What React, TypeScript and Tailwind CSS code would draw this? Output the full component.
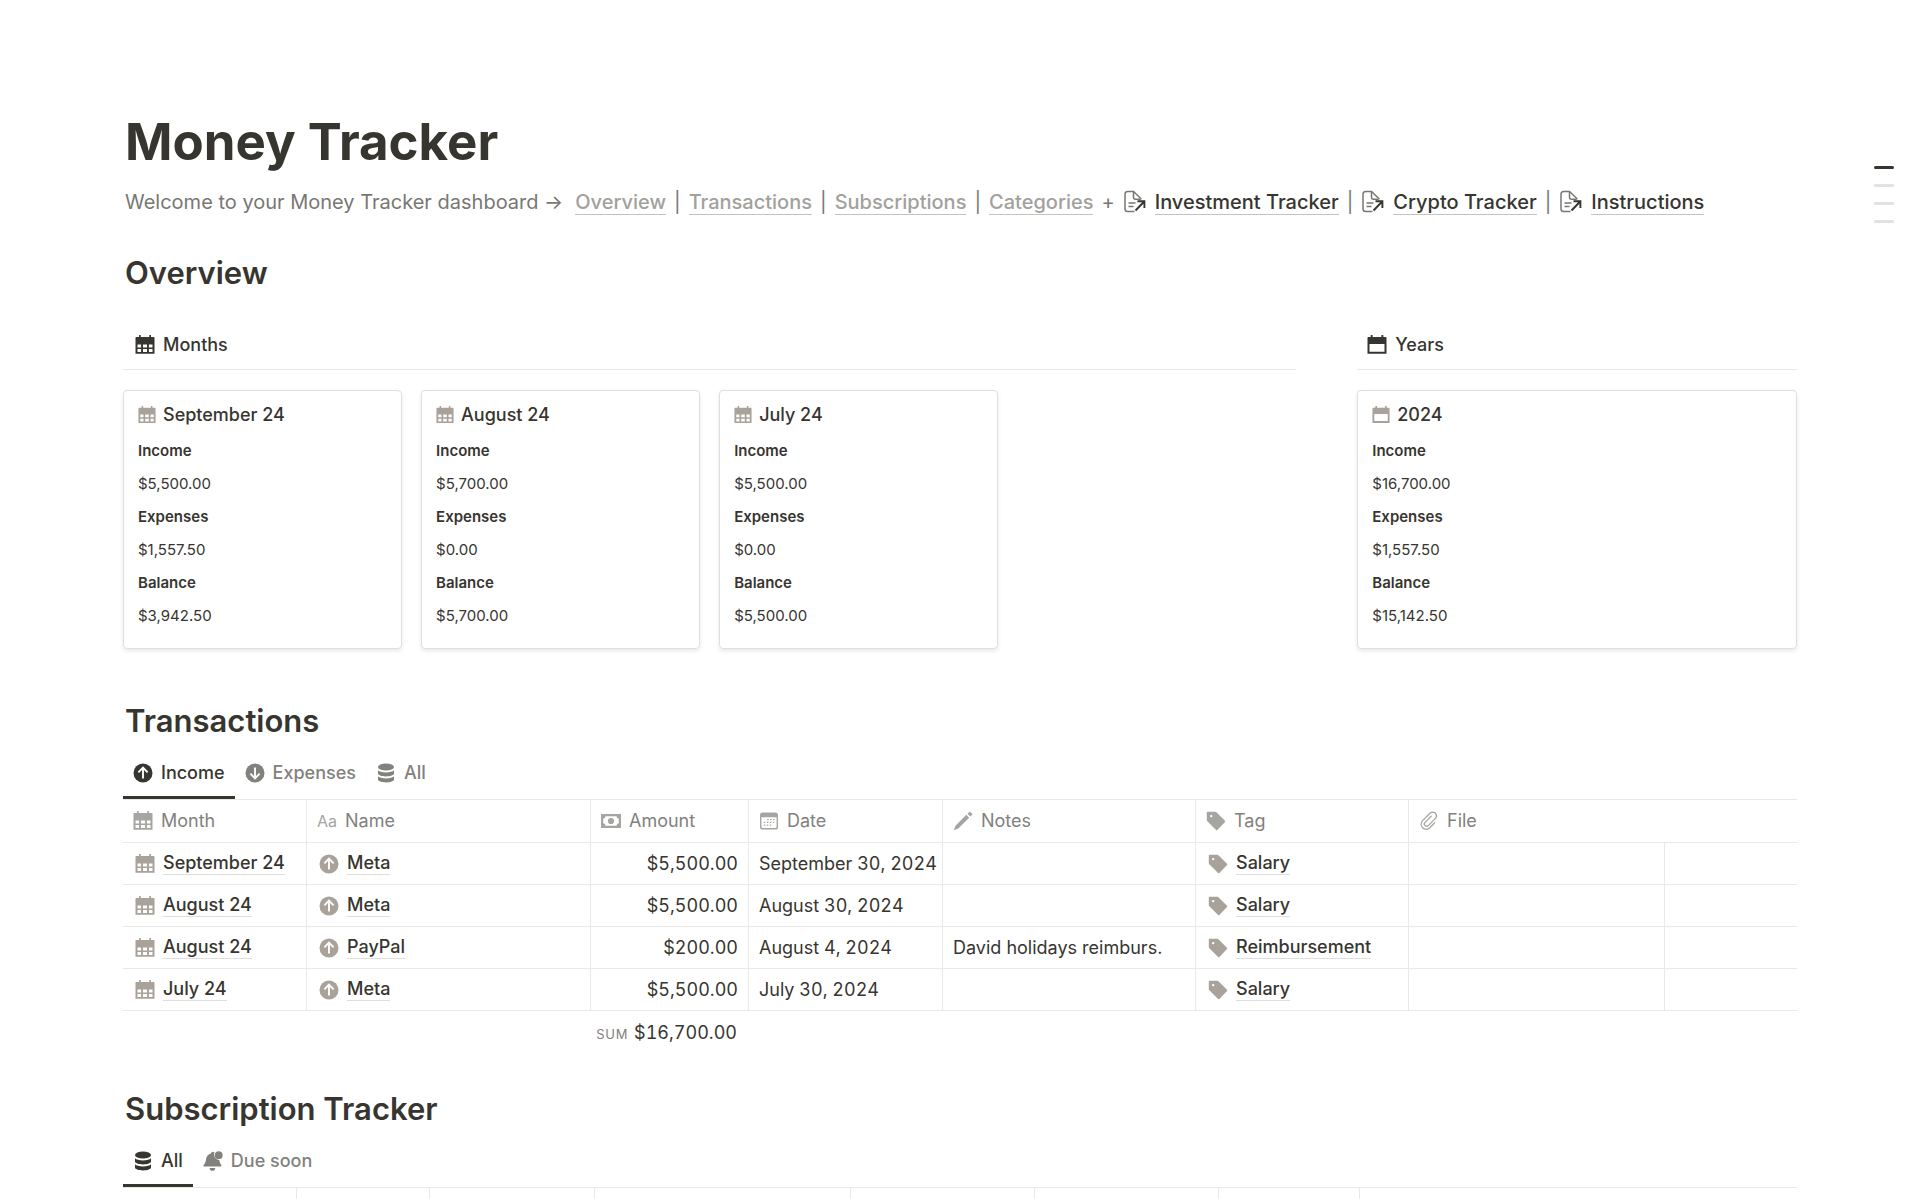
import type { ReactNode, SVGProps } from "react";

type IconProps = SVGProps<SVGSVGElement>;

function Svg({ children, viewBox = "0 0 20 20", className = "", ...rest }: IconProps & { children: ReactNode }) {
  return (
    <svg viewBox={viewBox} fill="currentColor" aria-hidden="true" className={`shrink-0 ${className}`} {...rest}>
      {children}
    </svg>
  );
}

const CalendarGrid = (p: IconProps) => (
  <Svg {...p}>
    <path
      fillRule="evenodd"
      d="M4 0h1.700v2h8.600V0H16v2h2.700c.4 0 .8.400.8.800v16H.5v-16c0-.400.400-.8.8-.8H4zM2.500 9.500v3h3.600v-3zM8 9.500v3h4v-3zM13.900 9.500v3h3.600v-3zM2.500 14.100v3h3.600v-3zM8 14.100v3h4v-3zM13.900 14.100v3h3.600v-3z"
    />
  </Svg>
);

const CalendarBlank = (p: IconProps) => (
  <Svg {...p}>
    <path
      fillRule="evenodd"
      d="M3.700 0h1.900v2h8.800V0h1.900v2h2.400c.4 0 .8.400.8.800v16H.5v-16c0-.400.400-.8.8-.8h2.400zM2.500 9v7.800h15V9z"
    />
  </Svg>
);

const ArrowUp = (p: IconProps) => (
  <Svg {...p}>
    <circle cx="10" cy="10" r="9.500" />
    <path d="M10 15.600V5M5.400 9.300 10 4.700l4.600 4.600" fill="none" stroke="#fff" strokeWidth="1.900" />
  </Svg>
);

const ArrowDown = (p: IconProps) => (
  <Svg {...p}>
    <circle cx="10" cy="10" r="9.500" />
    <path d="M10 4.400V15M5.400 10.700l4.600 4.600 4.600-4.600" fill="none" stroke="#fff" strokeWidth="1.900" />
  </Svg>
);

const Database = (p: IconProps) => (
  <Svg {...p}>
    <ellipse cx="10" cy="4" rx="8" ry="3.600" />
    <path d="M2 7.200c1.300 1.300 4.400 2.200 8 2.200s6.700-.9 8-2.200v3.300c0 1.600-3.600 2.900-8 2.900s-8-1.300-8-2.900z" />
    <path d="M2 13.300c1.300 1.300 4.400 2.200 8 2.200s6.700-.9 8-2.200v3.300c0 1.600-3.600 2.900-8 2.900s-8-1.300-8-2.900z" />
  </Svg>
);

const Banknote = (p: IconProps) => (
  <Svg {...p}>
    <path
      fillRule="evenodd"
      d="M0 3h20v14H0zM4.500 5.200a2.600 2.600 0 0 1-2.300 2.500v4.600a2.600 2.600 0 0 1 2.300 2.500h11a2.600 2.600 0 0 1 2.300-2.500V7.700a2.600 2.600 0 0 1-2.300-2.500z"
    />
    <circle cx="10" cy="10" r="3.100" />
  </Svg>
);

const DateIcon = (p: IconProps) => (
  <Svg {...p}>
    <path
      fillRule="evenodd"
      d="M3.600 1.500h12.800a2.600 2.600 0 0 1 2.600 2.600v11.800a2.600 2.600 0 0 1-2.600 2.600H3.600A2.600 2.600 0 0 1 1 15.900V4.100a2.600 2.600 0 0 1 2.600-2.600zM2.400 6.200v9.300c0 .9.700 1.600 1.600 1.600h12c.9 0 1.600-.7 1.600-1.600V6.200z"
    />
    <path
      d="M8.200 8.700h7.400M4.800 11.400h10.800M4.800 14.200h8.200"
      fill="none"
      stroke="currentColor"
      strokeWidth="1.300"
      strokeDasharray="1.500 1.500"
    />
  </Svg>
);

const Pencil = (p: IconProps) => (
  <Svg {...p}>
    <path d="M13.300 3.800 16.200 6.700 5.300 17.500.8 19.200l1.700-4.500z" />
    <path d="m16.800.5 2.800 2.800-2.300 2.300-2.800-2.800z" />
  </Svg>
);

const Tag = (p: IconProps) => (
  <Svg {...p}>
    <path
      fillRule="evenodd"
      d="M.8 1.700c0-.6.400-1 1-1h7.400c.5 0 .9.200 1.200.5l8.600 8.600c.4.400.4.900 0 1.300l-7.600 7.800c-.4.400-.9.400-1.300 0L1.300 10.300a1.700 1.700 0 0 1-.5-1.200zM5.200 3.900a1.200 1.200 0 1 0 0 2.400 1.200 1.200 0 0 0 0-2.400z"
    />
  </Svg>
);

const Clip = (p: IconProps) => (
  <Svg {...p}>
    <path
      d="m15.700 11.700-4.900 5.100a5 5 0 0 1-7.200 0 5.200 5.200 0 0 1 0-7.200l7.300-7.300a3.700 3.700 0 0 1 5.300 0 3.800 3.800 0 0 1 0 5.300l-6.900 7a2.200 2.200 0 0 1-3.200-3.200l6.100-6.100"
      fill="none"
      stroke="currentColor"
      strokeWidth="1.300"
      strokeLinecap="round"
    />
  </Svg>
);

const Bell = (p: IconProps) => (
  <Svg {...p}>
    <path d="M8.400 1.400c.8-.8 2.200-.8 3 0A5.600 5.600 0 0 0 16.200 9c.3 1.900.9 3.400 2 4.700.3.400.4 1.700-.3 1.700H1c-.6 0-.6-.9-.3-1.300 1.900-2.200 2-4 2.500-6.500.5-2.800 2.300-4.500 4.700-5.200z" />
    <circle cx="15.700" cy="4.200" r="3.900" />
    <path d="M6.600 16.900h5.600a2.800 2.800 0 0 1-5.600 0z" />
  </Svg>
);

const PageLink = (p: IconProps) => (
  <Svg viewBox="0 0 24 24" {...p}>
    <g fill="none" stroke="currentColor" strokeWidth="1.500">
      <path d="M11.500 21.500H4.800A2.800 2.800 0 0 1 2 18.700V4.300a2.800 2.800 0 0 1 2.800-2.800h5.700l7.300 7v1" />
      <path d="M10.500 1.800v5.400c0 1.300.8 2 2 2h5M5.500 13h7M5.500 16.500h5" />
    </g>
    <path d="m12.500 20.500 8.700-9M14.500 11.200h6.900V18" fill="none" stroke="#37352f" strokeWidth="1.900" />
  </Svg>
);

const jumpLinks = ["Overview", "Transactions", "Subscriptions", "Categories"];
const pageLinks = ["Investment Tracker", "Crypto Tracker", "Instructions"];

const months = [
  { name: "September 24", income: "$5,500.00", expenses: "$1,557.50", balance: "$3,942.50" },
  { name: "August 24", income: "$5,700.00", expenses: "$0.00", balance: "$5,700.00" },
  { name: "July 24", income: "$5,500.00", expenses: "$0.00", balance: "$5,500.00" },
];
const year = { name: "2024", income: "$16,700.00", expenses: "$1,557.50", balance: "$15,142.50" };

const transactions = [
  { month: "September 24", name: "Meta", amount: "$5,500.00", date: "September 30, 2024", notes: "", tag: "Salary" },
  { month: "August 24", name: "Meta", amount: "$5,500.00", date: "August 30, 2024", notes: "", tag: "Salary" },
  { month: "August 24", name: "PayPal", amount: "$200.00", date: "August 4, 2024", notes: "David holidays reimburs.", tag: "Reimbursement" },
  { month: "July 24", name: "Meta", amount: "$5,500.00", date: "July 30, 2024", notes: "", tag: "Salary" },
];

function Heading({ id, children }: { id: string; children: ReactNode }) {
  return (
    <h2 id={id} className="px-0.5 text-[31px] leading-10 font-semibold">
      {children}
    </h2>
  );
}

function Card({ icon, data }: { icon: ReactNode; data: typeof year }) {
  const fields = [
    ["Income", data.income],
    ["Expenses", data.expenses],
    ["Balance", data.balance],
  ];
  return (
    <article className="rounded-sm border border-[#dfdfde] px-3.5 pt-1 pb-4 shadow-[0_2px_4px_rgba(15,15,15,0.09)]">
      <h3 className="flex h-[39px] items-center gap-[7px] text-lg font-medium">
        <span className="text-[#a8a29a]">{icon}</span>
        {data.name}
      </h3>
      <dl className="text-[15px] leading-[33px]">
        {fields.map(([label, value]) => (
          <div key={label}>
            <dt className="font-semibold">{label}</dt>
            <dd>{value}</dd>
          </div>
        ))}
      </dl>
    </article>
  );
}

function Tab({ icon, label, active = false }: { icon: ReactNode; label: string; active?: boolean }) {
  return (
    <button
      role="tab"
      aria-selected={active}
      className={
        active
          ? "flex h-[50px] items-center gap-2 border-b-3 border-[#37352f] px-2.5 text-lg font-medium"
          : "flex h-[50px] items-center gap-2 border-b-3 border-transparent px-2.5 text-lg font-medium text-[#82817d]"
      }
    >
      {icon}
      {label}
    </button>
  );
}

function CellLink({ icon, children }: { icon: ReactNode; children: ReactNode }) {
  return (
    <a href="#transactions" className="flex items-center gap-2 pl-0.5 font-medium">
      <span className="text-[#a8a29a]">{icon}</span>
      <span className="border-b border-[#dededc] leading-[22px]">{children}</span>
    </a>
  );
}

function Th({ icon, children, span = 1 }: { icon: ReactNode; children: ReactNode; span?: number }) {
  return (
    <th
      colSpan={span}
      scope="col"
      className="h-[43px] border-r border-b border-[#e9e9e7] px-2.5 text-left font-normal text-[#82817d] last:border-r-0"
    >
      <span className="flex items-center gap-2">
        <span className="text-[#a5a5a1]">{icon}</span>
        {children}
      </span>
    </th>
  );
}

const td = "h-[42px] border-r border-b border-[#e9e9e7] px-2.5 last:border-r-0";
const icon = "size-5";

export default function App() {
  return (
    <div id="top" className="relative h-screen overflow-hidden bg-white font-['Inter',sans-serif] text-[#37352f]">
      <main className="mx-[123px] pt-[111px]">
        <h1 className="px-0.5 text-[51px] leading-[62px] font-bold">Money Tracker</h1>

        <p className="mt-[13px] flex items-center gap-2 px-0.5 text-xl leading-8 whitespace-nowrap text-[#787774]">
          <span className="pr-1">Welcome to your Money Tracker dashboard →</span>
          {jumpLinks.map((label, i) => (
            <span key={label} className="flex items-center gap-2">
              {i > 0 && <span>|</span>}
              <a href={`#${label.toLowerCase()}`} className="border-b border-[#c4c3c0] leading-6 font-medium text-[#a2a19e]">
                {label}
              </a>
            </span>
          ))}
          <span>+</span>
          {pageLinks.map((label, i) => (
            <span key={label} className="flex items-center gap-2">
              {i > 0 && <span>|</span>}
              <a href="#overview" className="flex items-center gap-2">
                <PageLink className="size-6" />
                <span className="border-b border-[#c4c3c0] leading-6 font-medium text-[#37352f]">{label}</span>
              </a>
            </span>
          ))}
        </p>

        <section className="mt-[35px]">
          <Heading id="overview">Overview</Heading>
          <div className="mt-6 flex gap-[61px]">
            <div className="flex-[1174_1_0]">
              <div className="flex h-[53px] items-center gap-2 border-b border-[#e9e9e7] px-3 pt-1 text-lg font-medium">
                <CalendarGrid className={icon} />
                Months
              </div>
              <div className="mt-5 grid grid-cols-4 gap-[19px]">
                {months.map((m) => (
                  <Card key={m.name} data={m} icon={<CalendarGrid className="size-[18px]" />} />
                ))}
              </div>
            </div>
            <div className="flex-[440_1_0]">
              <div className="flex h-[53px] items-center gap-2 border-b border-[#e9e9e7] px-2.5 pt-1 text-lg font-medium">
                <CalendarBlank className={icon} />
                Years
              </div>
              <div className="mt-5">
                <Card data={year} icon={<CalendarBlank className="size-[18px]" />} />
              </div>
            </div>
          </div>
        </section>

        <section className="mt-[52px]">
          <Heading id="transactions">Transactions</Heading>
          <div role="tablist" className="mt-2 flex border-b border-[#e9e9e7]">
            <Tab active icon={<ArrowUp className={icon} />} label="Income" />
            <Tab icon={<ArrowDown className={icon} />} label="Expenses" />
            <Tab icon={<Database className={icon} />} label="All" />
          </div>
          <table className="w-full table-fixed border-separate border-spacing-0 text-lg whitespace-nowrap">
            <colgroup>
              <col className="w-[184px]" />
              <col className="w-[284px]" />
              <col className="w-[158px]" />
              <col className="w-[194px]" />
              <col className="w-[253px]" />
              <col className="w-[213px]" />
              <col className="w-[256px]" />
              <col />
            </colgroup>
            <thead>
              <tr>
                <Th icon={<CalendarGrid className={icon} />}>Month</Th>
                <Th icon={<span className="text-base">Aa</span>}>Name</Th>
                <Th icon={<Banknote className={icon} />}>Amount</Th>
                <Th icon={<DateIcon className={icon} />}>Date</Th>
                <Th icon={<Pencil className={icon} />}>Notes</Th>
                <Th icon={<Tag className={icon} />}>Tag</Th>
                <Th span={2} icon={<Clip className={icon} />}>File</Th>
              </tr>
            </thead>
            <tbody>
              {transactions.map((t) => (
                <tr key={t.date}>
                  <td className={td}>
                    <CellLink icon={<CalendarGrid className={icon} />}>{t.month}</CellLink>
                  </td>
                  <td className={td}>
                    <CellLink icon={<ArrowUp className={icon} />}>{t.name}</CellLink>
                  </td>
                  <td className={`${td} text-right tabular-nums`}>{t.amount}</td>
                  <td className={`${td} tabular-nums`}>{t.date}</td>
                  <td className={td}>{t.notes}</td>
                  <td className={td}>
                    <CellLink icon={<Tag className={icon} />}>{t.tag}</CellLink>
                  </td>
                  <td className={td} />
                  <td className={td} />
                </tr>
              ))}
            </tbody>
            <tfoot>
              <tr>
                <td colSpan={2} />
                <td className="h-[43px] pr-3 text-right tabular-nums">
                  <span className="mr-1.5 text-[13px] tracking-wider text-[#82817d]">SUM</span>
                  $16,700.00
                </td>
                <td colSpan={5} />
              </tr>
            </tfoot>
          </table>
        </section>

        <section className="mt-[35px]">
          <Heading id="subscriptions">Subscription Tracker</Heading>
          <div role="tablist" className="mt-2 flex border-b border-[#e9e9e7]">
            <Tab active icon={<Database className={icon} />} label="All" />
            <Tab icon={<Bell className={icon} />} label="Due soon" />
          </div>
          <table className="w-full table-fixed border-separate border-spacing-0 text-lg whitespace-nowrap">
            <colgroup>
              <col className="w-[174px]" />
              <col className="w-[133px]" />
              <col className="w-[165px]" />
              <col className="w-[256px]" />
              <col className="w-[184px]" />
              <col className="w-[184px]" />
              <col className="w-[141px]" />
              <col />
            </colgroup>
            <tbody>
              <tr>
                <td className={td} />
                <td className={td} />
                <td className={td} />
                <td className={td} />
                <td className={td} />
                <td className={td} />
                <td className={td} />
                <td className={`${td} text-[#a5a5a1]`}>
                  <Clip className={icon} />
                </td>
              </tr>
            </tbody>
          </table>
        </section>
      </main>

      <nav aria-label="Page sections" className="absolute top-[166px] right-[26px] flex flex-col gap-[15px]">
        <a href="#top" aria-label="Top" className="h-[3px] w-5 rounded-sm bg-[#37352f]" />
        <a href="#overview" aria-label="Overview" className="h-[3px] w-5 rounded-sm bg-[#e3e2e0]" />
        <a href="#transactions" aria-label="Transactions" className="h-[3px] w-5 rounded-sm bg-[#e3e2e0]" />
        <a href="#subscriptions" aria-label="Subscription Tracker" className="h-[3px] w-5 rounded-sm bg-[#e3e2e0]" />
      </nav>
    </div>
  );
}
